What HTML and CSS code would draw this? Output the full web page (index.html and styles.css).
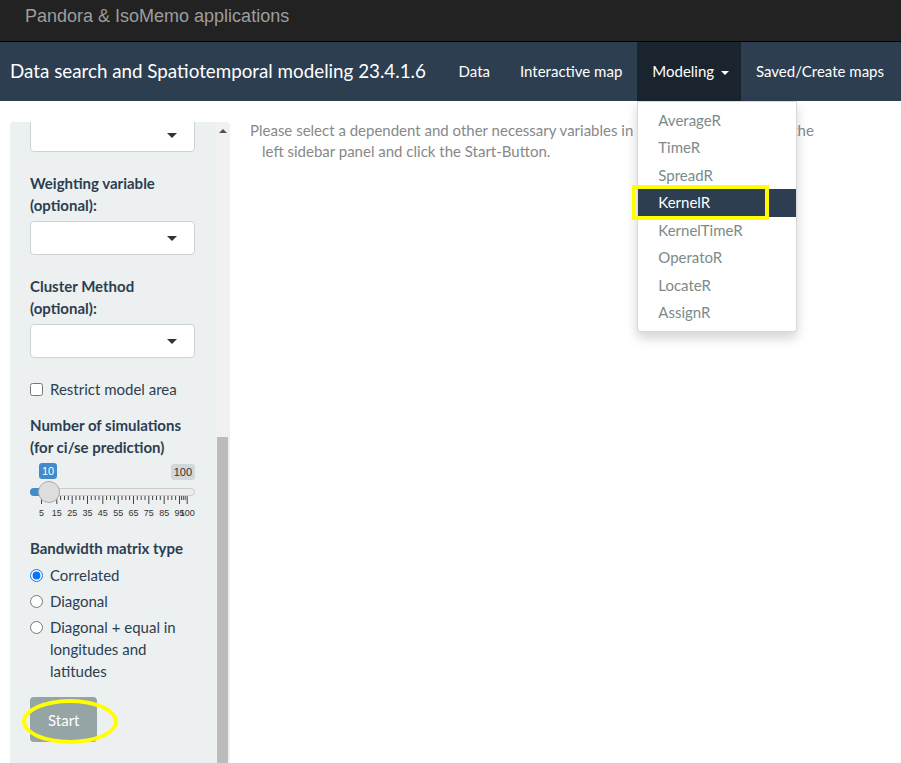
FILE: index.html
```html
<!DOCTYPE html>
<html>
<head>
<meta charset="utf-8">
<link rel="stylesheet" href="styles.css">
</head>
<body>
<div class="topbar">Pandora &amp; IsoMemo applications</div>

<nav class="navbar">
	<div class="brand">Data search and Spatiotemporal modeling 23.4.1.6</div>
	<ul class="nav">
		<li><a>Data</a></li>
		<li><a>Interactive map</a></li>
		<li class="dropdown open">
			<a>Modeling <span class="caret"></span></a>
			<ul class="dropdown-menu">
				<li><a>AverageR</a></li>
				<li><a>TimeR</a></li>
				<li><a>SpreadR</a></li>
				<li class="active"><a>KernelR</a><span class="mark-box"></span></li>
				<li><a>KernelTimeR</a></li>
				<li><a>OperatoR</a></li>
				<li><a>LocateR</a></li>
				<li><a>AssignR</a></li>
			</ul>
		</li>
		<li><a>Saved/Create maps</a></li>
	</ul>
</nav>

<div class="page">
	<aside class="sidebar">
		<div class="well">
			<div class="form-group first">
				<div class="select"><span class="select-caret"></span></div>
			</div>

			<div class="form-group">
				<label class="control-label">Weighting variable (optional):</label>
				<div class="select"><span class="select-caret"></span></div>
			</div>

			<div class="form-group">
				<label class="control-label">Cluster Method (optional):</label>
				<div class="select"><span class="select-caret"></span></div>
			</div>

			<div class="form-group check">
				<label class="option"><input type="checkbox"> <span>Restrict model area</span></label>
			</div>

			<div class="form-group slider-group">
				<label class="control-label">Number of simulations (for ci/se prediction)</label>
				<div class="slider">
					<div class="slider-labels">
						<span class="irs-from">10</span>
						<span class="irs-max">100</span>
					</div>
					<div class="slider-line">
						<div class="irs-bar"></div>
						<div class="irs-handle"></div>
					</div>
					<svg class="irs-grid" width="165" height="24" viewBox="0 0 165 24">
						<g stroke="#444" stroke-width="1">
							<line x1="11.5" y1="0" x2="11.5" y2="8"/>
							<line x1="15.3" y1="0" x2="15.3" y2="4"/>
							<line x1="19.2" y1="0" x2="19.2" y2="4"/>
							<line x1="23.0" y1="0" x2="23.0" y2="4"/>
							<line x1="26.8" y1="0" x2="26.8" y2="8"/>
							<line x1="30.6" y1="0" x2="30.6" y2="4"/>
							<line x1="34.5" y1="0" x2="34.5" y2="4"/>
							<line x1="38.3" y1="0" x2="38.3" y2="4"/>
							<line x1="42.2" y1="0" x2="42.2" y2="8"/>
							<line x1="46.0" y1="0" x2="46.0" y2="4"/>
							<line x1="49.8" y1="0" x2="49.8" y2="4"/>
							<line x1="53.6" y1="0" x2="53.6" y2="4"/>
							<line x1="57.5" y1="0" x2="57.5" y2="8"/>
							<line x1="61.3" y1="0" x2="61.3" y2="4"/>
							<line x1="65.2" y1="0" x2="65.2" y2="4"/>
							<line x1="69.0" y1="0" x2="69.0" y2="4"/>
							<line x1="72.8" y1="0" x2="72.8" y2="8"/>
							<line x1="76.6" y1="0" x2="76.6" y2="4"/>
							<line x1="80.5" y1="0" x2="80.5" y2="4"/>
							<line x1="84.3" y1="0" x2="84.3" y2="4"/>
							<line x1="88.2" y1="0" x2="88.2" y2="8"/>
							<line x1="92.0" y1="0" x2="92.0" y2="4"/>
							<line x1="95.8" y1="0" x2="95.8" y2="4"/>
							<line x1="99.6" y1="0" x2="99.6" y2="4"/>
							<line x1="103.5" y1="0" x2="103.5" y2="8"/>
							<line x1="107.3" y1="0" x2="107.3" y2="4"/>
							<line x1="111.2" y1="0" x2="111.2" y2="4"/>
							<line x1="115.0" y1="0" x2="115.0" y2="4"/>
							<line x1="118.8" y1="0" x2="118.8" y2="8"/>
							<line x1="122.6" y1="0" x2="122.6" y2="4"/>
							<line x1="126.5" y1="0" x2="126.5" y2="4"/>
							<line x1="130.3" y1="0" x2="130.3" y2="4"/>
							<line x1="134.2" y1="0" x2="134.2" y2="8"/>
							<line x1="138.0" y1="0" x2="138.0" y2="4"/>
							<line x1="141.8" y1="0" x2="141.8" y2="4"/>
							<line x1="145.6" y1="0" x2="145.6" y2="4"/>
							<line x1="149.5" y1="0" x2="149.5" y2="8"/>
							<line x1="151.4" y1="0" x2="151.4" y2="4"/>
							<line x1="153.3" y1="0" x2="153.3" y2="4"/>
							<line x1="155.2" y1="0" x2="155.2" y2="4"/>
							<line x1="157.2" y1="0" x2="157.2" y2="8"/>
						</g>
						<g class="grid-text" text-anchor="middle">
							<text x="11.5" y="20">5</text>
							<text x="26.8" y="20">15</text>
							<text x="42.2" y="20">25</text>
							<text x="57.5" y="20">35</text>
							<text x="72.8" y="20">45</text>
							<text x="88.2" y="20">55</text>
							<text x="103.5" y="20">65</text>
							<text x="118.8" y="20">75</text>
							<text x="134.2" y="20">85</text>
							<text x="149.5" y="20">95</text>
							<text x="157.2" y="20">100</text>
						</g>
					</svg>
				</div>
			</div>

			<div class="form-group radio-group">
				<label class="control-label">Bandwidth matrix type</label>
				<div class="radios">
					<label class="option"><input type="radio" name="bw" checked> <span>Correlated</span></label>
					<label class="option"><input type="radio" name="bw"> <span>Diagonal</span></label>
					<label class="option"><input type="radio" name="bw"> <span>Diagonal + equal in longitudes and latitudes</span></label>
				</div>
			</div>

			<div class="start-wrap">
				<button class="btn">Start</button>
				<span class="mark-ring"></span>
			</div>
		</div>
		<div class="scrollbar">
			<div class="scroll-up"></div>
			<div class="scroll-space"></div>
			<div class="scroll-thumb"></div>
		</div>
	</aside>

	<main class="main">
		<p class="hint">Please select a dependent and other necessary variables in the main input fields of the left sidebar panel and click the Start-Button.</p>
	</main>
</div>
</body>
</html>
```

FILE: styles.css
```css
html, body
{
	margin: 0;
	height: 100%;
	overflow: hidden;
}

body
{
	font-family: Lato, "Open Sans", sans-serif;
	font-size: 15px;
	line-height: 1.42857;
	color: #2c3e50;
	background: #fff;
}

/* top strip */

.topbar
{
	height: 41px;
	padding-left: 25px;
	background: #222;
	border-bottom: 1px solid #000;
	color: #9d9d9d;
	font-family: "Liberation Sans", Arial, sans-serif;
	font-size: 18px;
	line-height: 32px;
}

/* navbar */

.navbar
{
	display: flex;
	align-items: center;
	height: 59px;
	padding: 0 2px 0 10px;
	background: #2c3e50;
	color: #fff;
}

.brand
{
	font-size: 18.8px;
	white-space: nowrap;
}

.nav
{
	display: flex;
	margin: 0 0 0 auto;
	padding: 0;
	list-style: none;
}

.nav > li
{
	position: relative;
}

.nav > li > a
{
	display: block;
	padding: 0 15px;
	line-height: 59px;
	color: #fff;
	white-space: nowrap;
}

.nav > li.open > a
{
	padding-right: 12px;
	background: #1a242f;
}

.caret
{
	display: inline-block;
	width: 0;
	height: 0;
	margin-left: 3px;
	vertical-align: middle;
	border-top: 4px solid #fff;
	border-left: 4px solid transparent;
	border-right: 4px solid transparent;
}

.dropdown-menu
{
	position: absolute;
	top: 100%;
	left: 0;
	z-index: 10;
	min-width: 158px;
	margin: 0;
	padding: 5px 0;
	list-style: none;
	background: #fff;
	border: 1px solid rgba(0, 0, 0, 0.15);
	border-radius: 0 0 4px 4px;
	box-shadow: 0 6px 12px rgba(0, 0, 0, 0.175);
}

.dropdown-menu > li
{
	position: relative;
}

.dropdown-menu > li > a
{
	display: block;
	padding: 3px 20px;
	color: #7b8a8b;
	white-space: nowrap;
}

.dropdown-menu > li.active > a
{
	background: #2c3e50;
	color: #fff;
}

/* yellow annotation marks */

.mark-box
{
	position: absolute;
	top: -4px;
	left: -6px;
	width: 129px;
	height: 27px;
	border: 4px solid #ffff00;
}

.mark-ring
{
	position: absolute;
	left: -8px;
	top: 2px;
	width: 88px;
	height: 37px;
	border: 4px solid #ffff00;
	border-radius: 50%;
}

/* page */

.page
{
	display: flex;
	align-items: flex-start;
	padding: 21px 0 0 10px;
}

.sidebar
{
	display: flex;
	width: 220px;
	height: calc(100vh - 122px);
	overflow: hidden;
	border-radius: 4px 4px 0 0;
	flex-shrink: 0;
}

.well
{
	width: 165px;
	padding: 0 20px;
	background: #ecf0f1;
}

.form-group
{
	margin-bottom: 20px;
}

.form-group.first
{
	margin-top: -4px;
}

.control-label
{
	display: block;
	margin-bottom: 5px;
	font-weight: 700;
	line-height: 22px;
}

.select
{
	position: relative;
	height: 32px;
	background: #fff;
	border: 1px solid #ccd3d8;
	border-radius: 4px;
}

.select-caret
{
	position: absolute;
	right: 17px;
	top: 14px;
	border-top: 5px solid #333;
	border-left: 5px solid transparent;
	border-right: 5px solid transparent;
}

.option
{
	display: flex;
	align-items: flex-start;
	font-weight: 400;
	line-height: 22px;
}

.option input
{
	width: 13px;
	height: 13px;
	margin: 5px 7px 0 0;
	flex-shrink: 0;
}

.check
{
	margin-bottom: 14px;
}

.slider-group
{
	margin-bottom: 17px;
}

.radio-group
{
	margin-bottom: 15px;
}

.radios .option
{
	margin-bottom: 4px;
}

.radios .option:last-child
{
	margin-bottom: 0;
}

/* slider */

.slider
{
	position: relative;
}

.slider-labels
{
	position: relative;
	height: 24px;
	font-family: Arial, "Liberation Sans", sans-serif;
	font-size: 11px;
}

.irs-from, .irs-max
{
	position: absolute;
	top: 0;
	padding: 1px 3px;
	line-height: 14px;
	border-radius: 3px;
}

.irs-from
{
	left: 9px;
	background: #428bca;
	color: #fff;
}

.irs-max
{
	right: 0;
	top: 1px;
	background: rgba(0, 0, 0, 0.1);
	color: #333;
}

.slider-line
{
	position: relative;
	height: 6px;
	margin-top: 1px;
	background: #ededed;
	border: 1px solid #ccc;
	border-radius: 8px;
}

.irs-bar
{
	position: absolute;
	left: -1px;
	top: -1px;
	width: 14px;
	height: 8px;
	background: #428bca;
	border-radius: 8px 0 0 8px;
}

.irs-handle
{
	position: absolute;
	left: 7px;
	top: -8px;
	width: 20px;
	height: 20px;
	background: #dedede;
	border: 1px solid #ababab;
	border-radius: 50%;
}

.irs-grid
{
	display: block;
}

.grid-text
{
	font-family: Arial, "Liberation Sans", sans-serif;
	font-size: 9px;
	fill: #333;
}

/* start button */

.start-wrap
{
	position: relative;
	display: inline-block;
}

.btn
{
	display: block;
	height: 45px;
	padding: 0 18px;
	background: #95a5a6;
	border: 0;
	border-radius: 4px;
	color: #fff;
	font-family: Lato, sans-serif;
	font-size: 15px;
}

/* fake browser scrollbar of the sidebar */

.scrollbar
{
	display: flex;
	flex-direction: column;
	width: 15px;
	background: #f1f1f1;
}

.scroll-up
{
	width: 0;
	height: 0;
	margin: 7px auto 0;
	border-bottom: 4px solid #505050;
	border-left: 4px solid transparent;
	border-right: 4px solid transparent;
}

.scroll-space
{
	height: 304px;
}

.scroll-thumb
{
	flex: 1;
	width: 11px;
	margin-left: 2px;
	background: #bcbcbc;
}

/* main panel */

.main
{
	flex: 1;
	padding-left: 20px;
}

.hint
{
	width: 568px;
	margin: -2px 0 0;
	padding-left: 12px;
	text-indent: -12px;
	color: #888;
}
```
